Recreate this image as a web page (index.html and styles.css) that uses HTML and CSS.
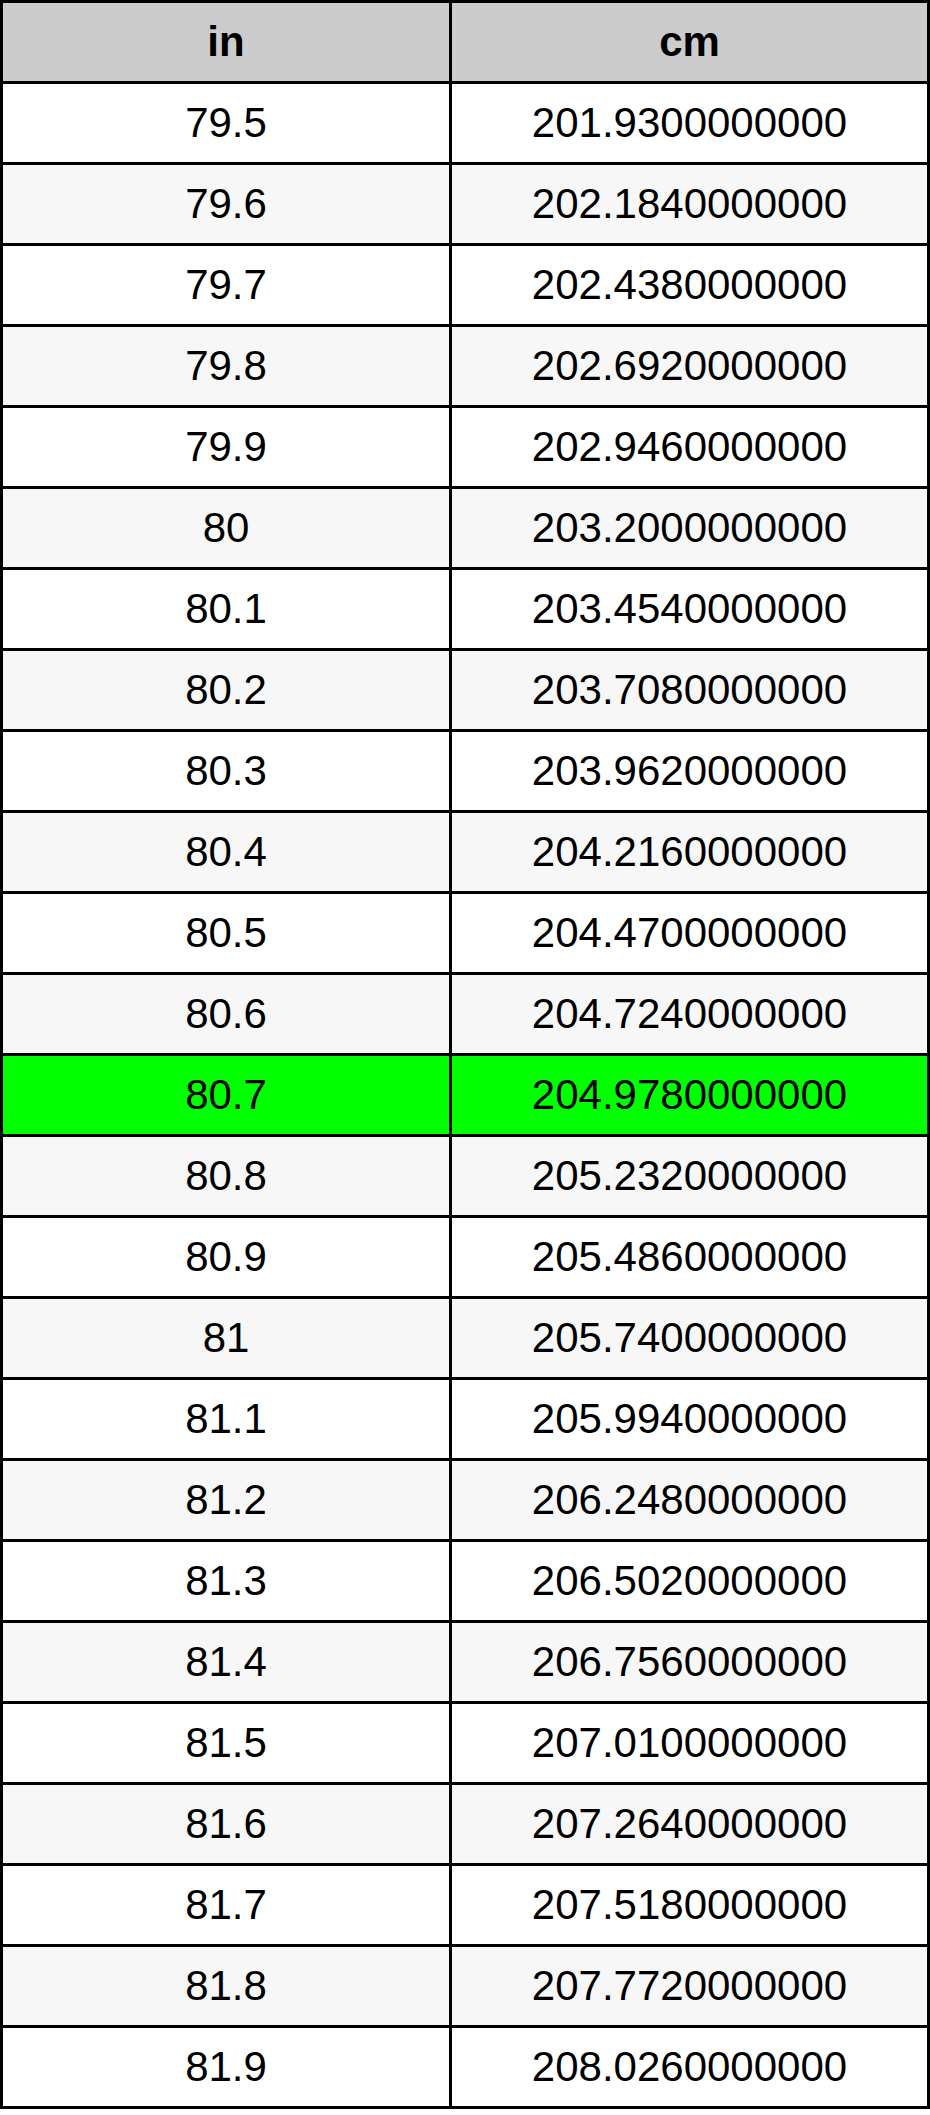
FILE: index.html
```html
<!DOCTYPE html>
<html>
<head>
<meta charset="utf-8">
<link rel="stylesheet" href="styles.css">
</head>
<body>
<table class="conv">
<colgroup><col class="c1"><col class="c2"></colgroup>
<thead>
<tr><th>in</th><th>cm</th></tr>
</thead>
<tbody>
<tr><td>79.5</td><td>201.9300000000</td></tr>
<tr class="alt"><td>79.6</td><td>202.1840000000</td></tr>
<tr><td>79.7</td><td>202.4380000000</td></tr>
<tr class="alt"><td>79.8</td><td>202.6920000000</td></tr>
<tr><td>79.9</td><td>202.9460000000</td></tr>
<tr class="alt"><td>80</td><td>203.2000000000</td></tr>
<tr><td>80.1</td><td>203.4540000000</td></tr>
<tr class="alt"><td>80.2</td><td>203.7080000000</td></tr>
<tr><td>80.3</td><td>203.9620000000</td></tr>
<tr class="alt"><td>80.4</td><td>204.2160000000</td></tr>
<tr><td>80.5</td><td>204.4700000000</td></tr>
<tr class="alt"><td>80.6</td><td>204.7240000000</td></tr>
<tr class="hl"><td>80.7</td><td>204.9780000000</td></tr>
<tr class="alt"><td>80.8</td><td>205.2320000000</td></tr>
<tr><td>80.9</td><td>205.4860000000</td></tr>
<tr class="alt"><td>81</td><td>205.7400000000</td></tr>
<tr><td>81.1</td><td>205.9940000000</td></tr>
<tr class="alt"><td>81.2</td><td>206.2480000000</td></tr>
<tr><td>81.3</td><td>206.5020000000</td></tr>
<tr class="alt"><td>81.4</td><td>206.7560000000</td></tr>
<tr><td>81.5</td><td>207.0100000000</td></tr>
<tr class="alt"><td>81.6</td><td>207.2640000000</td></tr>
<tr><td>81.7</td><td>207.5180000000</td></tr>
<tr class="alt"><td>81.8</td><td>207.7720000000</td></tr>
<tr><td>81.9</td><td>208.0260000000</td></tr>
</tbody>
</table>
</body>
</html>
```

FILE: styles.css
```css
html, body {
  margin: 0;
  padding: 0;
  background: #ffffff;
}
.conv {
  width: 930px;
  border-collapse: separate;
  border-spacing: 3px;
  background: #000000;
  table-layout: fixed;
  font-family: "Liberation Sans", Arial, sans-serif;
  font-size: 42px;
  color: #000000;
}
.c1 { width: 446px; }
.c2 { width: 475px; }
.conv th,
.conv td {
  height: 78px;
  padding: 0;
  text-align: center;
  vertical-align: middle;
  background: #ffffff;
}
.conv th {
  background: #cccccc;
  font-weight: bold;
}
.conv tr.alt td {
  background: #f7f7f7;
}
.conv tr.hl td {
  background: #00ff00;
}
```
